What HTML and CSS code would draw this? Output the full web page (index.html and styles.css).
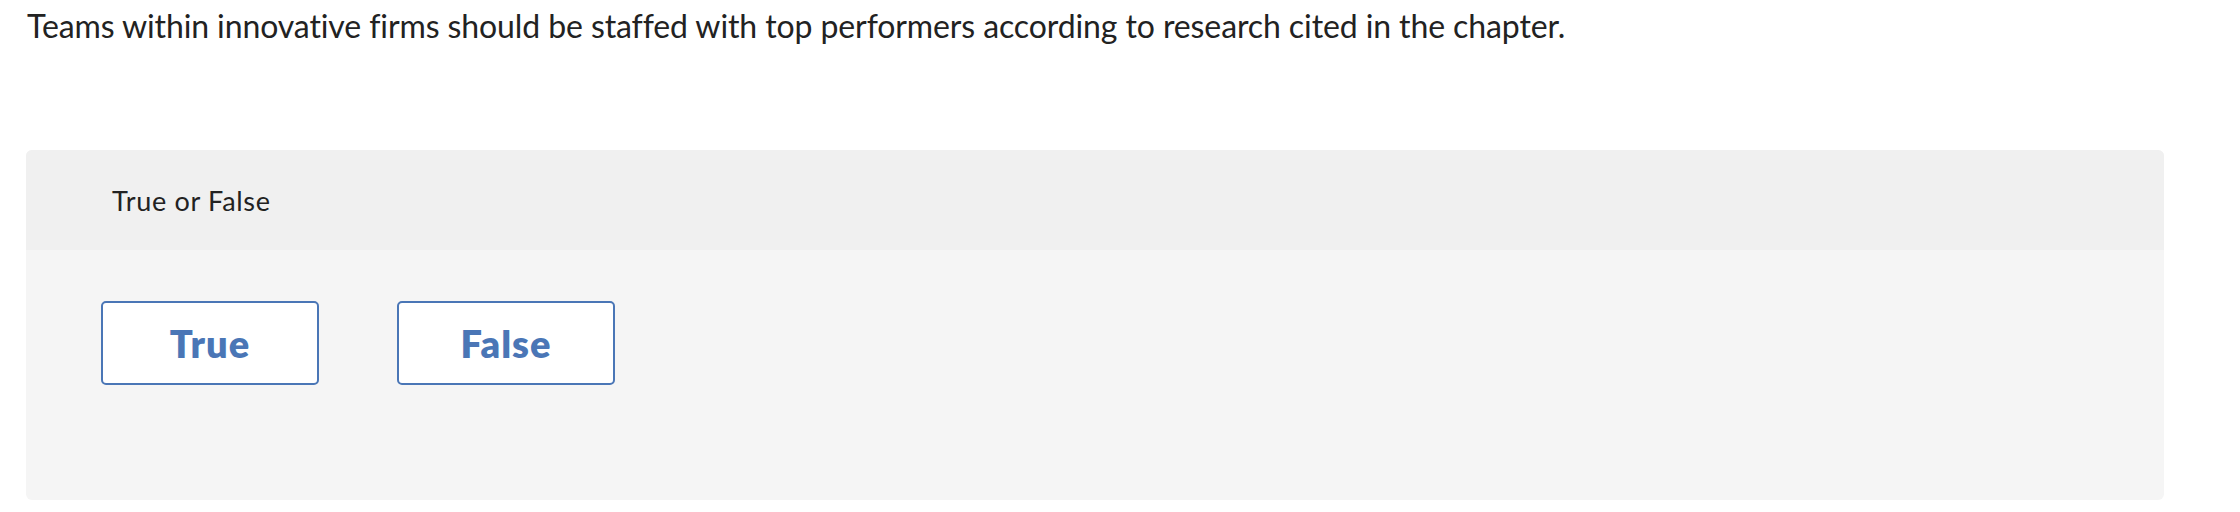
FILE: index.html
```html
<!DOCTYPE html>
<html lang="en">
<head>
  <meta charset="UTF-8">
  <title>True or False</title>
  <link rel="stylesheet" href="styles.css">
</head>
<body>

<div class="question">
  <p class="prompt">Teams within innovative firms should be staffed with top performers according to research cited in the chapter.</p>

  <div class="answer-panel">
    <div class="answer-header">True or False</div>
    <div class="answer-body">
      <button class="choice">True</button>
      <button class="choice">False</button>
    </div>
  </div>
</div>

</body>
</html>
```

FILE: styles.css
```css
body {
  margin: 0;
  background: #fff;
  font-family: 'Lato', 'Noto Sans', sans-serif;
  color: #222;
}
.question {
  padding: 7px 76px 10px 26px;
}
.prompt {
  margin: 0 0 0 1px;
  font-size: 32px;
  line-height: 38px;
  letter-spacing: -0.1px;
}
.answer-panel {
  margin-top: 105px;
  border-radius: 6px;
  overflow: hidden;
  background: #f5f5f5;
}
.answer-header {
  height: 100px;
  display: flex;
  align-items: center;
  padding-left: 86px;
  background: #f0f0f0;
  font-size: 27px;
  letter-spacing: 0.7px;
}
.answer-body {
  height: 250px;
  box-sizing: border-box;
  padding: 51px 0 0 75px;
  display: flex;
  align-items: flex-start;
  gap: 78px;
}
.choice {
  width: 218px;
  height: 84px;
  background: #fff;
  border: 2px solid #4a76b6;
  border-radius: 5px;
  color: #4a76b6;
  font-family: inherit;
  font-size: 38px;
  font-weight: 800;
  letter-spacing: 1px;
  cursor: pointer;
}
.choice:hover {
  background: #f0f5fc;
}
```
